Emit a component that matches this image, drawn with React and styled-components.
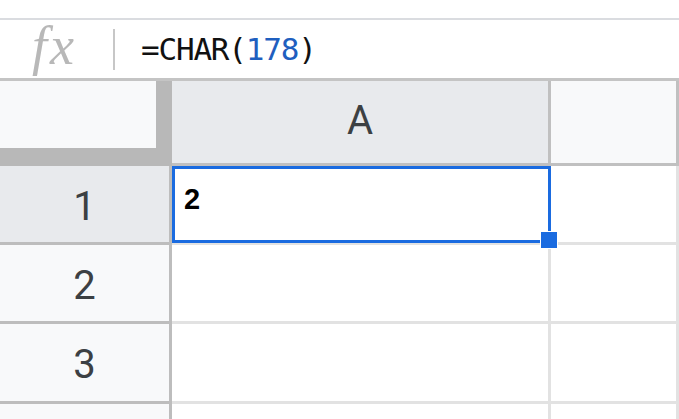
import React from "react";
import styled, { createGlobalStyle } from "styled-components";

const GlobalStyle = createGlobalStyle`
  html, body {
    margin: 0;
    padding: 0;
    background: #ffffff;
    overflow: hidden;
  }
  * {
    box-sizing: border-box;
  }
`;

const rows = [1, 2, 3, 4];

export default function App() {
  return (
    <>
      <GlobalStyle />
      <Page>
        <TopStrip />
        <FormulaBar>
          <FxLabel>fx</FxLabel>
          <Separator />
          <Formula>
            =CHAR(<Arg>178</Arg>)
          </Formula>
        </FormulaBar>
        <Grid>
          <Corner>
            <CornerInner />
          </Corner>
          <ColHeader selected>A</ColHeader>
          <ColHeader />
          {rows.map((n) => (
            <React.Fragment key={n}>
              {/* row 4 is cut off by the window edge, its number falls below */}
              <RowHeader selected={n === 1}>{n < 4 ? n : ""}</RowHeader>
              <Cell active={n === 1}>
                {n === 1 && (
                  <>
                    <CellValue>2</CellValue>
                    <FillHandle />
                  </>
                )}
              </Cell>
              <Cell />
            </React.Fragment>
          ))}
        </Grid>
      </Page>
    </>
  );
}

const Page = styled.div`
  width: 679px;
  height: 419px;
  overflow: hidden;
  background: #ffffff;
`;

const TopStrip = styled.div`
  height: 20px;
  border-bottom: 2px solid #dadce0;
`;

const FormulaBar = styled.div`
  height: 61px;
  display: flex;
  align-items: center;
  border-bottom: 3px solid #c4c4c4;
`;

const FxLabel = styled.div`
  width: 113px;
  padding-left: 32px;
  font-family: "Liberation Serif", serif;
  font-style: italic;
  font-size: 54px;
  letter-spacing: 3px;
  color: #b8b8b8;
  line-height: 1;
  padding-bottom: 6px;
`;

const Separator = styled.div`
  width: 2px;
  height: 41px;
  background: #c7c7c7;
`;

const Formula = styled.div`
  padding-left: 26px;
  font-family: "DejaVu Sans Mono", "Liberation Mono", monospace;
  font-size: 31px;
  color: #111111;
  letter-spacing: -1.2px;
`;

const Arg = styled.span`
  color: #1f5fbf;
`;

const Grid = styled.div`
  display: grid;
  grid-template-columns: 172px 379px 1fr;
  grid-template-rows: 85px 79px 79px 80px 40px;
`;

const Corner = styled.div`
  background: #b8b8b8;
`;

const CornerInner = styled.div`
  width: 156px;
  height: 67px;
  background: #f8f9fa;
`;

const HeaderText = styled.div`
  display: flex;
  align-items: center;
  justify-content: center;
  font-family: Roboto, "Liberation Sans", sans-serif;
  font-size: 40px;
  color: #3c4043;
  background: ${(p) => (p.selected ? "#e8eaed" : "#f8f9fa")};
`;

const ColHeader = styled(HeaderText)`
  border-right: 3px solid #c0c0c0;
  border-bottom: 3px solid #c0c0c0;
  padding-bottom: 4px;
`;

const RowHeader = styled(HeaderText)`
  border-right: 3px solid #bdbdbd;
  border-bottom: 3px solid #bdbdbd;
  padding-top: 4px;
`;

const Cell = styled.div`
  position: relative;
  background: #ffffff;
  border-right: 3px solid #e2e2e2;
  border-bottom: 3px solid #e2e2e2;
  padding: 19px 0 0 12px;

  &::after {
    content: "";
    display: ${(p) => (p.active ? "block" : "none")};
    position: absolute;
    top: 0;
    left: 0;
    right: -3px;
    bottom: -1px;
    border: 3px solid #1a6be0;
  }
`;

const CellValue = styled.div`
  font-family: "Liberation Sans", Arial, sans-serif;
  font-weight: bold;
  font-size: 29px;
  line-height: 29px;
  color: #000000;
`;

const FillHandle = styled.div`
  position: absolute;
  right: -9px;
  bottom: -6px;
  width: 16px;
  height: 16px;
  background: #1a6be0;
  box-shadow: 0 0 0 1px #ffffff;
  z-index: 1;
`;
